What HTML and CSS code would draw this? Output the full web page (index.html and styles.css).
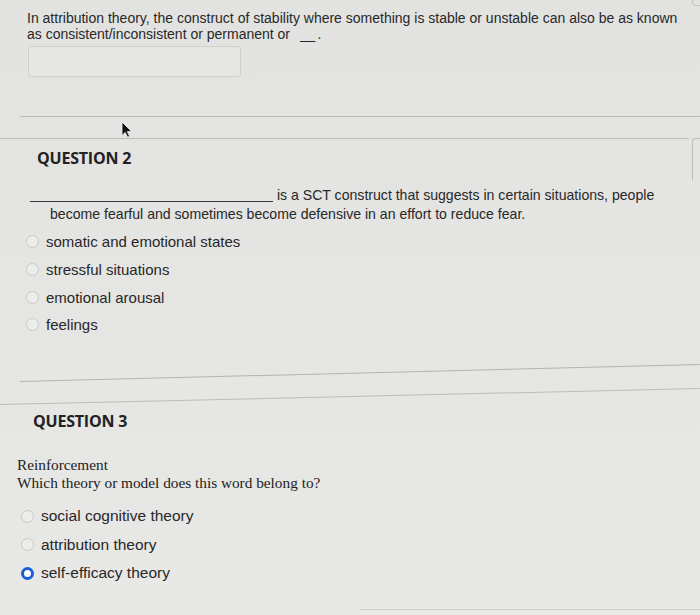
FILE: index.html
```html
<!DOCTYPE html>
<html>
<head>
<meta charset="utf-8">
<link rel="stylesheet" href="styles.css">
</head>
<body>
<div class="page">
  <section class="q1">
    <div class="q1-main">
      <p class="q1-text">In attribution theory, the construct of stability where something is stable or unstable can also be as known as consistent/inconsistent or permanent or <span class="short-blank">&nbsp;&nbsp;&nbsp;&nbsp;</span><span class="dot">.</span></p>
      <div class="answer-box"></div>
    </div>
    <div class="corner-top"></div>
  </section>

  <div class="rule rule-a"></div>
  <div class="cursor-gap">
    <svg class="cursor" width="12" height="17" viewBox="0 0 12 17">
      <path d="M1 1 L1 14.5 L4.2 11.4 L6.6 16.2 L8.6 15.3 L6.3 10.6 L10.6 10.6 Z" fill="#111" stroke="#f4f4f4" stroke-width="0.8" stroke-linejoin="round"/>
    </svg>
  </div>

  <section class="q2">
    <div class="q2-main">
      <h2 class="q-title q2-title">QUESTION 2</h2>
      <p class="q2-text"><span class="long-blank"></span> is a SCT construct that suggests in certain situations, people become fearful and sometimes become defensive in an effort to reduce fear.</p>
      <ul class="options opts2">
        <li><span class="radio"></span>somatic and emotional states</li>
        <li><span class="radio"></span>stressful situations</li>
        <li><span class="radio"></span>emotional arousal</li>
        <li><span class="radio"></span>feelings</li>
      </ul>
    </div>
    <div class="side-box"></div>
  </section>

  <div class="rule rule-c"></div>
  <div class="rule rule-d"></div>

  <section class="q3">
    <h2 class="q-title q3-title">QUESTION 3</h2>
    <p class="serif-line first">Reinforcement</p>
    <p class="serif-line">Which theory or model does this word belong to?</p>
    <ul class="options opts3">
      <li><span class="radio"></span>social cognitive theory</li>
      <li><span class="radio"></span>attribution theory</li>
      <li><span class="radio selected"></span>self-efficacy theory</li>
    </ul>
    <div class="rule rule-e"></div>
  </section>
</div>
</body>
</html>
```

FILE: styles.css
```css
* { box-sizing: border-box; }
html, body { margin: 0; padding: 0; }
body {
  background: linear-gradient(180deg, #e2e2e0 0%, #e5e5e3 50%, #e8e8e6 100%);
  color: #282828;
  font-family: "Liberation Sans", Arial, Helvetica, sans-serif;
  width: 700px;
  height: 615px;
  overflow: hidden;
}
.page { width: 700px; }

/* Question 1 */
.q1 { display: flex; }
.q1-main { flex: 1; padding: 10px 0 0 27px; }
.q1-text {
  margin: 0;
  font-size: 14px;
  line-height: 16px;
  width: 665px;
}
.short-blank {
  text-decoration: underline;
  text-decoration-color: #2a2a2a;
  text-underline-offset: 2px;
  margin-left: 6px;
  margin-right: 2px;
}
.answer-box {
  margin-top: 4px;
  margin-left: 1px;
  width: 213px;
  height: 31px;
  border: 1px solid #cfcfcd;
  border-radius: 3px;
  background: #e6e6e4;
}
.corner-top {
  width: 11px;
  height: 6px;
  border-left: 1px solid #c4c4c2;
  border-bottom: 1px solid #c4c4c2;
  border-bottom-left-radius: 4px;
}

/* rules */
.rule { height: 1px; background: #b9b9b7; }
.rule-a { margin: 39px 0 0 20px; }
.cursor-gap { height: 21px; padding: 4px 0 0 121px; }
.cursor { display: block; }

/* Question 2 */
.q2 { display: flex; }
.q2-main { flex: 1; border-top: 1px solid #bdbdbb; }
.side-box {
  width: 8px;
  height: 42px;
  margin-left: 3px;
  border-top: 1px solid #bdbdbb;
  border-left: 1px solid #bdbdbb;
  border-top-left-radius: 4px;
}
.q-title {
  margin: 0;
  font-family: "Open Sans", "Liberation Sans", sans-serif;
  font-weight: 700;
  font-size: 16px;
  line-height: 22px;
  color: #222;
  letter-spacing: -0.2px;
}
.q2-title { padding: 8px 0 0 37px; }
.q2-text {
  margin: 17px 0 0 0;
  padding-left: 50px;
  text-indent: -20px;
  width: 665px;
  font-size: 14.1px;
  line-height: 19px;
}
.long-blank {
  display: inline-block;
  width: 243px;
  border-bottom: 1px solid #3a3a3a;
  vertical-align: -2px;
  text-indent: 0;
}
.options { list-style: none; margin: 0; padding: 0; }
.options li {
  display: flex;
  align-items: center;
  height: 28px;
}
.radio {
  display: inline-block;
  width: 13px;
  height: 13px;
  border-radius: 50%;
  border: 1px solid #c9c9c7;
  background: #ececea;
  flex: none;
}
.opts2 { margin-top: 4px; padding-left: 26px; font-size: 15px; }
.opts2 li { height: 27.7px; }
.opts2 .radio { margin-right: 7px; }

/* rules between Q2 and Q3 */
.rule-c {
  margin: 42px 0 0 20px;
  transform: rotate(-1.43deg);
  transform-origin: left center;
  background: #b3b3b1;
}
.rule-d {
  margin: 22px 0 0 0;
  transform: rotate(-1.31deg);
  transform-origin: left center;
  background: #bcbcba;
}

/* Question 3 */
.q3-title { padding: 5px 0 0 33px; }
.serif-line {
  margin: 0;
  padding-left: 17px;
  font-family: "Liberation Serif", "Times New Roman", serif;
  font-size: 15.3px;
  line-height: 18px;
  color: #222;
}
.serif-line.first { margin-top: 24px; }
.opts3 { margin-top: 10px; padding-left: 21px; font-size: 15.5px; }
.opts3 li { height: 28.5px; }
.opts3 .radio { margin-right: 7px; }
.radio.selected {
  border: 3.5px solid #1b5fd6;
  background: #fff;
}
.rule-e {
  margin: 22px 0 0 360px;
  background: #cfcfcd;
}
```
